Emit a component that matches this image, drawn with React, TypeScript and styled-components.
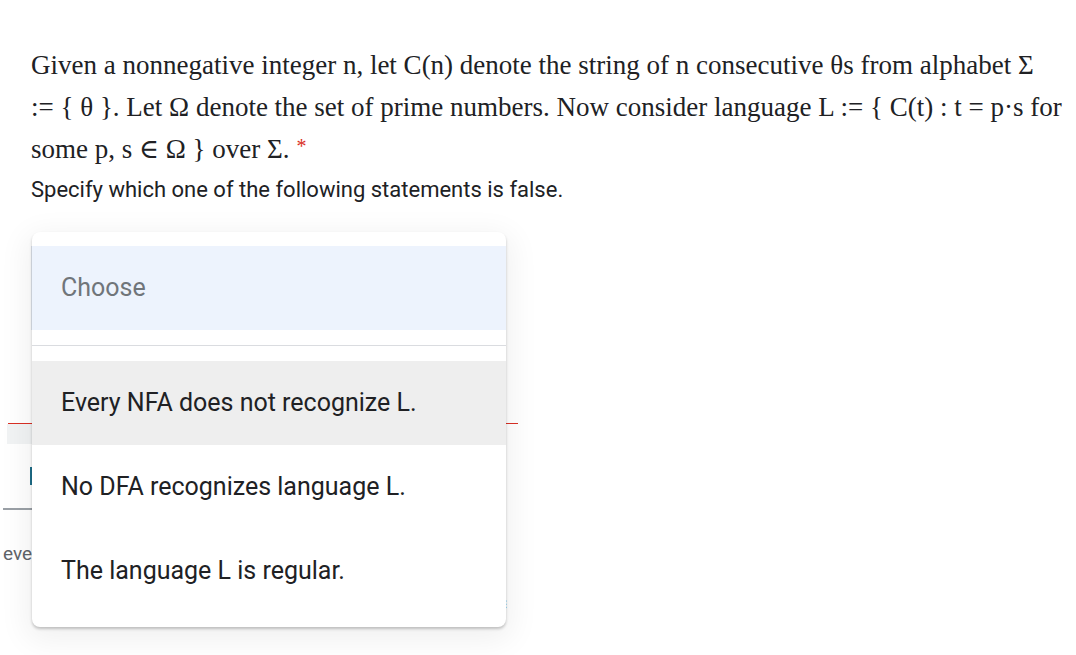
import styled, { createGlobalStyle } from 'styled-components';

const GlobalStyle = createGlobalStyle`
  html, body {
    margin: 0;
    padding: 0;
    background: #ffffff;
  }
  * {
    box-sizing: border-box;
  }
`;

const Page = styled.div`
  position: relative;
  width: 1076px;
  height: 655px;
  overflow: hidden;
  background: #ffffff;
`;

const Question = styled.div`
  padding: 44px 0 0 31px;
`;

const Title = styled.div`
  font-family: 'Liberation Serif', 'DejaVu Serif', serif;
  font-size: 27px;
  line-height: 42px;
  color: #202124;
  white-space: nowrap;
`;

const Required = styled.span`
  color: #d93025;
  font-size: 20px;
  margin-left: 7px;
  vertical-align: top;
  position: relative;
  top: -3px;
`;

const Description = styled.div`
  margin-top: 6px;
  font-family: Roboto, 'Liberation Sans', sans-serif;
  font-size: 22px;
  line-height: 28px;
  color: #202124;
`;

const SelectField = styled.div`
  box-sizing: content-box;
  margin: 155px 0 0 8px;
  width: 510px;
  height: 64px;
  border-bottom: 1px solid #d93025;
`;

const ErrorTint = styled.div`
  margin-left: 7px;
  width: 25px;
  height: 20px;
  background: #f1f3f4;
`;

const Caret = styled.div`
  margin: 23px 0 0 30px;
  width: 2px;
  height: 18px;
  background: #1f6f8b;
`;

const Divider = styled.div`
  margin: 23px 0 0 3px;
  width: 380px;
  height: 2px;
  background: #9aa0a6;
`;

const Hint = styled.div`
  margin: 30px 0 0 3px;
  font-family: Roboto, 'Liberation Sans', sans-serif;
  font-size: 19px;
  line-height: 28px;
  color: #5f6368;
`;

const Dots = styled.span`
  position: absolute;
  left: 504px;
  top: 596px;
  font-family: Roboto, sans-serif;
  font-size: 11px;
  color: #3c4a6b;
`;

const Menu = styled.div`
  position: absolute;
  left: 32px;
  top: 232px;
  width: 474px;
  padding: 14px 0 14px;
  background: #ffffff;
  border-radius: 8px;
  box-shadow: 0 2px 3px rgba(0, 0, 0, 0.22), 0 8px 30px 6px rgba(0, 0, 0, 0.06);
`;

const Option = styled.div<{ $tone?: 'selected' | 'hover' | 'plain' }>`
  height: 84px;
  display: flex;
  align-items: center;
  padding: 0 0 2px 29px;
  font-family: Roboto, 'Liberation Sans', sans-serif;
  font-size: 25px;
  color: ${({ $tone }) => ($tone === 'selected' ? '#70757a' : '#202124')};
  background: ${({ $tone }) =>
    $tone === 'selected' ? '#edf3fd' : $tone === 'hover' ? '#eeeeee' : '#ffffff'};
  border-left: ${({ $tone }) => ($tone === 'selected' ? '1px solid #c9ced6' : 'none')};
  margin-left: ${({ $tone }) => ($tone === 'selected' ? '-1px' : '0')};
`;

const MenuDivider = styled.div`
  margin: 15px 0;
  height: 1px;
  background: #dadce0;
`;

const options = [
  'Every NFA does not recognize L.',
  'No DFA recognizes language L.',
  'The language L is regular.',
];

export default function App() {
  return (
    <Page>
      <GlobalStyle />
      <Question>
        <Title>
          Given a nonnegative integer n, let C(n) denote the string of n consecutive θs from alphabet Σ
          <br />
          := {'{'} θ {'}'}. Let Ω denote the set of prime numbers. Now consider language L := {'{'} C(t) : t = p·s for
          <br />
          some p, s ∈ Ω {'}'} over Σ.
          <Required>*</Required>
        </Title>
        <Description>Specify which one of the following statements is false.</Description>
      </Question>

      <SelectField />
      <ErrorTint />
      <Caret />
      <Divider />
      <Hint>eve</Hint>
      <Dots>⁝</Dots>

      <Menu>
        <Option $tone="selected">Choose</Option>
        <MenuDivider />
        {options.map((text, i) => (
          <Option key={text} $tone={i === 0 ? 'hover' : 'plain'}>
            {text}
          </Option>
        ))}
      </Menu>
    </Page>
  );
}
